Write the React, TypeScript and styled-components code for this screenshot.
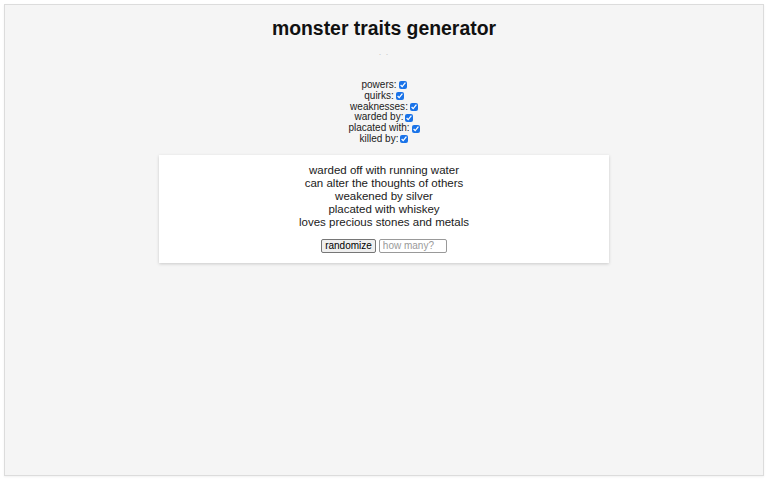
import { useState } from "react";
import styled, { createGlobalStyle } from "styled-components";

const GlobalStyle = createGlobalStyle`
    html, body {
        margin: 0;
        padding: 0;
        background: #ffffff;
    }
    body {
        padding: 4px;
        font-family: "Liberation Sans", Arial, sans-serif;
        color: #111;
    }
`;

const Frame = styled.main`
    box-sizing: border-box;
    height: 472px;
    width: 760px;
    background: #f5f5f5;
    border: 1px solid #dcdcdc;
    box-shadow: 0 1px 2px rgba(0, 0, 0, 0.06);
    display: flex;
    flex-direction: column;
    align-items: center;
    padding-top: 11px;
`;

const Title = styled.h1`
    margin: 0;
    font-size: 19.4px;
    font-weight: 700;
    line-height: 24px;
`;

const Dots = styled.div`
    margin-top: 7px;
    font-size: 9px;
    line-height: 10px;
    color: #c8c8c8;
    letter-spacing: 1px;
`;

const Options = styled.form`
    margin-top: 23px;
    display: flex;
    flex-direction: column;
    align-items: center;
    font-size: 10px;
    line-height: 10.8px;
    color: #1a1a1a;
`;

const Option = styled.label`
    display: flex;
    align-items: center;
    gap: 2px;
`;

const Check = styled.input`
    width: 8px;
    height: 8px;
    margin: 0;
    accent-color: #1a73e8;
`;

const Card = styled.section`
    margin-top: 10px;
    width: 450px;
    box-sizing: border-box;
    background: #fff;
    box-shadow: 0 1px 3px rgba(0, 0, 0, 0.18);
    padding: 9px 0 10px;
    display: flex;
    flex-direction: column;
    align-items: center;
`;

const Traits = styled.ul`
    list-style: none;
    margin: 0;
    padding: 0;
    text-align: center;
    font-size: 11.5px;
    line-height: 13px;
    color: #1a1a1a;
`;

const Controls = styled.div`
    margin-top: 10px;
    display: flex;
    gap: 3px;
`;

const Button = styled.button`
    font-family: inherit;
    font-size: 10px;
    height: 14px;
    padding: 0 3px;
    background: #efefef;
    border: 1px solid #767676;
    border-radius: 2px;
    color: #000;
`;

const Count = styled.input`
    font-family: inherit;
    font-size: 10px;
    width: 68px;
    height: 14px;
    box-sizing: border-box;
    padding: 0 3px;
    border: 1px solid #999;
    border-radius: 2px;
    &::placeholder {
        color: #9a9a9a;
    }
`;

const categories = ["powers", "quirks", "weaknesses", "warded by", "placated with", "killed by"];

const traits = [
    "warded off with running water",
    "can alter the thoughts of others",
    "weakened by silver",
    "placated with whiskey",
    "loves precious stones and metals",
];

const App = () => {
    const [checked, setChecked] = useState<boolean[]>(categories.map(() => true));

    return (
        <>
            <GlobalStyle />
            <Frame>
                <Title>monster traits generator</Title>
                <Dots>. .</Dots>
                <Options>
                    {categories.map((c, i) => (
                        <Option key={c}>
                            {c}:
                            <Check
                                type="checkbox"
                                checked={checked[i]}
                                onChange={() =>
                                    setChecked((prev) => prev.map((v, j) => (j === i ? !v : v)))
                                }
                            />
                        </Option>
                    ))}
                </Options>
                <Card>
                    <Traits>
                        {traits.map((t) => (
                            <li key={t}>{t}</li>
                        ))}
                    </Traits>
                    <Controls>
                        <Button type="button">randomize</Button>
                        <Count type="text" placeholder="how many?" />
                    </Controls>
                </Card>
            </Frame>
        </>
    );
};

export default App;
